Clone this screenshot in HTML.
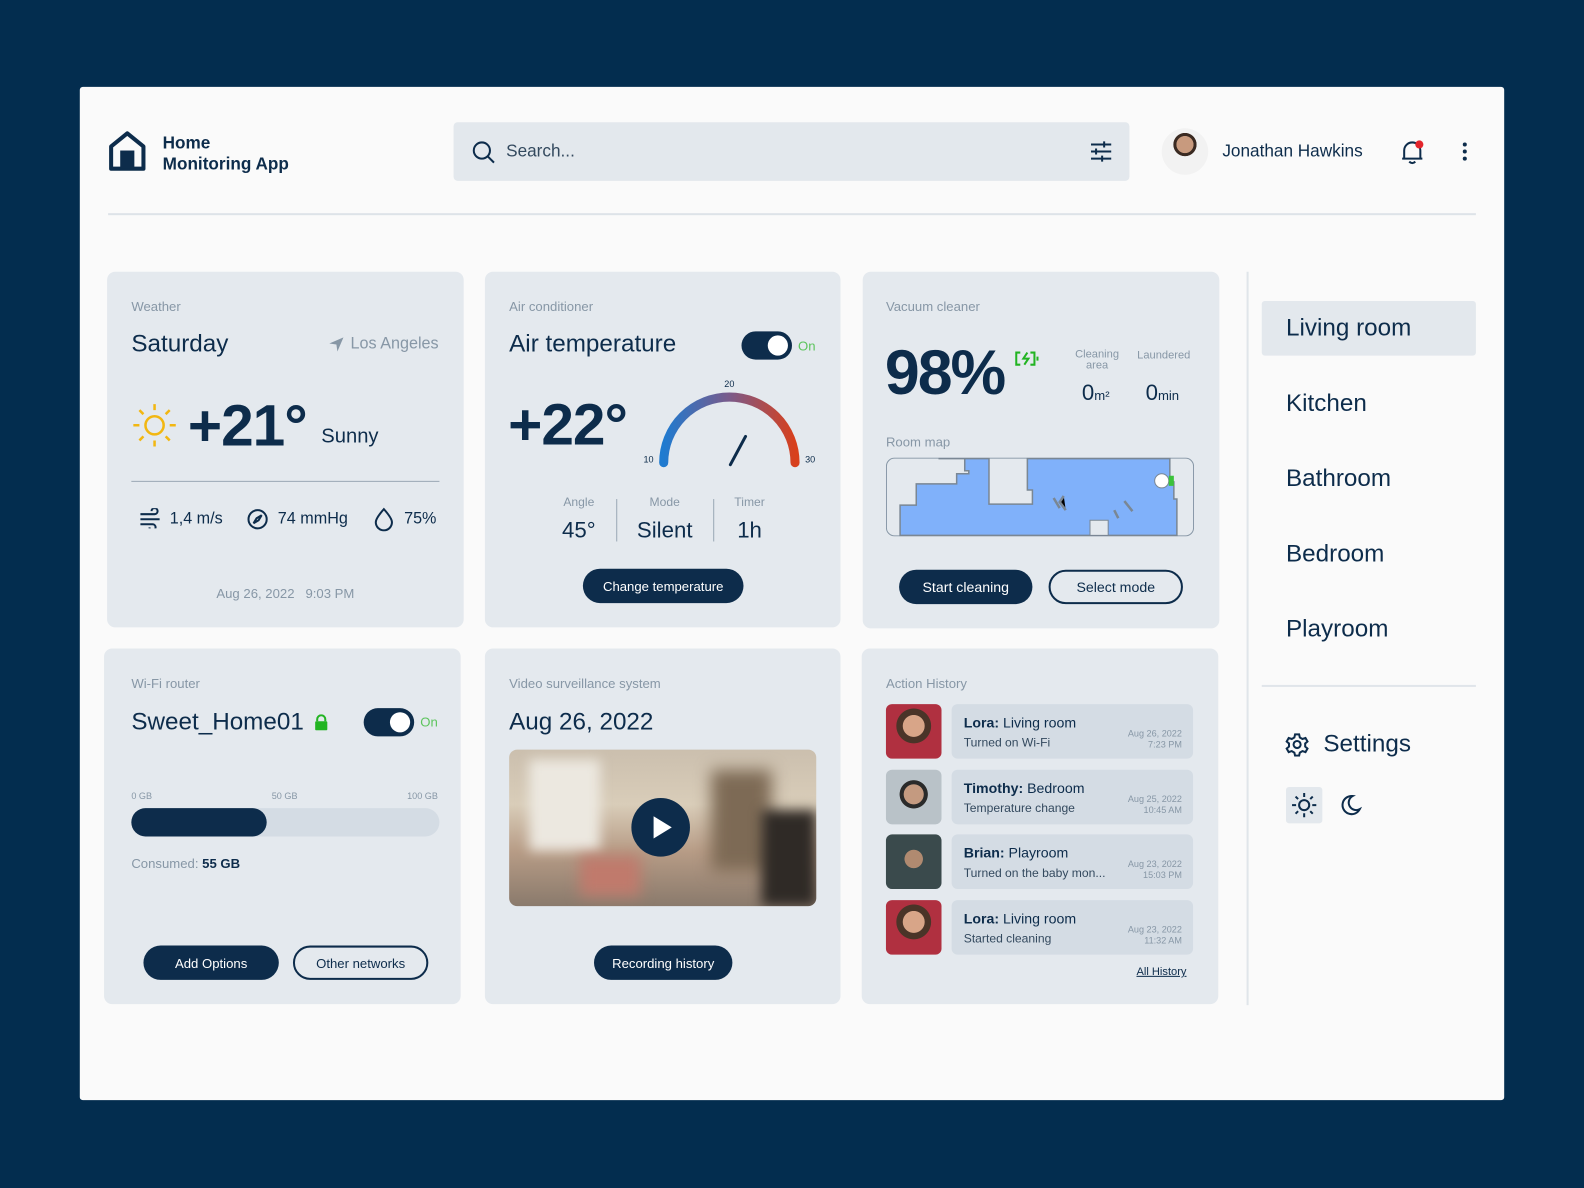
<!DOCTYPE html>
<html><head><meta charset="utf-8"><style>
*{margin:0;padding:0;box-sizing:border-box}
html,body{width:1584px;height:1188px;overflow:hidden;background:#032d4f;font-family:"Liberation Sans",sans-serif;color:#0d2c4b}
#w{position:absolute;left:0;top:0;width:1568px;height:1176px;transform:scale(1.0102);transform-origin:0 0}
.a{position:absolute}
.panel{left:79px;top:86px;width:1410px;height:1003px;background:#fafafa;border-radius:3px}
.card{position:absolute;background:#e4e9ee;border-radius:8px}
.lbl{position:absolute;font-size:13px;color:#8797a6}
.t24{position:absolute;font-size:24px;color:#0d2c4b}
.btn{position:absolute;height:34px;border-radius:17px;background:#0d2c4b;color:#fff;font-size:13px;display:flex;align-items:center;justify-content:center}
.btno{background:transparent;border:2px solid #0d2c4b;color:#0d2c4b}
.tog{position:absolute;width:50px;height:28px;border-radius:14px;background:#0d2c4b}
.tog:after{content:"";position:absolute;right:4px;top:4px;width:20px;height:20px;border-radius:50%;background:#fff}
.on{position:absolute;font-size:13px;color:#5cc45c}
.room{position:absolute;left:1273px;font-size:24px}
.hi{position:absolute;left:942px;width:239px;height:54px;background:#d4dce4;border-radius:6px}
.av{position:absolute;left:877px;width:55px;height:54px;border-radius:6px}
.nm{position:absolute;left:954px;font-size:14px}
.sb{position:absolute;left:954px;font-size:12px;color:#33495e}
.dt{position:absolute;right:398px;font-size:9px;color:#8797a6;text-align:right;line-height:11px}
</style></head><body><div id="w">
<div class="a panel"></div>
<svg class="a" style="left:107px;top:129px" width="38" height="42" viewBox="0 0 38 42"><path d="M3 16 L19 3 L35 16 V38 H3 Z" fill="none" stroke="#0d2c4b" stroke-width="4" stroke-linejoin="round"/><rect x="12" y="20" width="14" height="18" fill="#0d2c4b"/></svg>
<div class="a" style="left:161px;top:131px;font-size:17px;line-height:21px;font-weight:bold">Home<br>Monitoring App</div>
<div class="a" style="left:449px;top:121px;width:669px;height:58px;background:#e3e8ed;border-radius:4px"></div>
<svg class="a" style="left:467px;top:139px" width="24" height="24" viewBox="0 0 24 24"><circle cx="10" cy="10" r="8" fill="none" stroke="#0d2c4b" stroke-width="2"/><path d="M16 16 L22 22" stroke="#0d2c4b" stroke-width="2"/></svg>
<div class="a" style="left:501px;top:140px;font-size:17px;color:#33495e">Search...</div>
<svg class="a" style="left:1078px;top:138px" width="24" height="24" viewBox="0 0 24 24" stroke="#0d2c4b" stroke-width="2" fill="none"><path d="M2 5H22M2 12H22M2 19H22M15 2V8M7 9V15M13 16V22"/></svg>
<div class="a" style="left:1150px;top:127px;width:46px;height:46px;border-radius:50%;background:radial-gradient(circle at 50% 35%,#c89a7e 0 22%,#3a2a22 23% 30%,#f2f2f2 31%)"></div>
<div class="a" style="left:1210px;top:140px;font-size:17px">Jonathan Hawkins</div>
<svg class="a" style="left:1386px;top:138px" width="24" height="26" viewBox="0 0 24 26"><path d="M4 19 V11 A8 8 0 0 1 20 11 V19 Z M2 19 H22 M9 22 Q12 25 15 22" fill="none" stroke="#0d2c4b" stroke-width="2"/><circle cx="19" cy="5" r="4" fill="#e3242b"/></svg>
<svg class="a" style="left:1446px;top:140px" width="8" height="22"><circle cx="4" cy="3" r="2" fill="#0d2c4b"/><circle cx="4" cy="10" r="2" fill="#0d2c4b"/><circle cx="4" cy="17" r="2" fill="#0d2c4b"/></svg>
<div class="a" style="left:107px;top:211px;width:1354px;height:2px;background:#dde3e8"></div>

<!-- weather -->
<div class="card" style="left:106px;top:269px;width:353px;height:352px"></div>
<div class="lbl" style="left:130px;top:296px">Weather</div>
<div class="t24" style="left:130px;top:327px">Saturday</div>
<svg class="a" style="left:325px;top:333px" width="16" height="16" viewBox="0 0 16 16"><path d="M15 1 L1 7 L8 8 L9 15 Z" fill="#8797a6"/></svg>
<div class="a" style="left:347px;top:332px;font-size:16px;color:#8797a6">Los Angeles</div>
<svg class="a" style="left:130px;top:398px" width="46" height="46" viewBox="0 0 46 46" stroke="#f2b712" stroke-width="2.5" fill="none"><circle cx="23" cy="23" r="9"/><path d="M23 2V8M23 38V44M2 23H8M38 23H44M8 8L12 12M34 34L38 38M8 38L12 34M34 12L38 8"/></svg>
<div class="a" style="left:186px;top:388px;font-size:58px;font-weight:bold;letter-spacing:-1px">+21°</div>
<div class="a" style="left:318px;top:421px;font-size:20px">Sunny</div>
<div class="a" style="left:130px;top:476px;width:305px;height:1px;background:#9aa8b5"></div>
<svg class="a" style="left:137px;top:503px" width="24" height="20" viewBox="0 0 24 20" stroke="#0d2c4b" stroke-width="2" fill="none"><path d="M2 6H16A3 3 0 1 0 13 3M2 11H21M2 16H14A3 3 0 1 1 11 19"/></svg>
<div class="a" style="left:168px;top:505px;font-size:16px">1,4 m/s</div>
<svg class="a" style="left:244px;top:503px" width="22" height="22" viewBox="0 0 22 22" stroke="#0d2c4b" stroke-width="2" fill="none"><circle cx="11" cy="11" r="9"/><path d="M15 7 L12 12 L7 15 L10 10Z"/></svg>
<div class="a" style="left:275px;top:505px;font-size:16px">74 mmHg</div>
<svg class="a" style="left:370px;top:502px" width="20" height="24" viewBox="0 0 20 24" stroke="#0d2c4b" stroke-width="2" fill="none"><path d="M10 2 Q18 11 18 15 A8 8 0 0 1 2 15 Q2 11 10 2Z"/></svg>
<div class="a" style="left:400px;top:505px;font-size:16px">75%</div>
<div class="lbl" style="left:106px;width:353px;text-align:center;top:580px">Aug 26, 2022 &nbsp; 9:03 PM</div>

<!-- AC -->
<div class="card" style="left:480px;top:269px;width:352px;height:352px"></div>
<div class="lbl" style="left:504px;top:296px">Air conditioner</div>
<div class="t24" style="left:504px;top:327px">Air temperature</div>
<div class="tog" style="left:734px;top:328px"></div><div class="on" style="left:790px;top:335px">On</div>
<div class="a" style="left:503px;top:387px;font-size:58px;font-weight:bold;letter-spacing:-1px">+22°</div>
<svg class="a" style="left:630px;top:370px" width="190" height="100" viewBox="0 0 190 100"><defs><linearGradient id="g" x1="0" x2="1"><stop offset="0" stop-color="#1f7bd0"/><stop offset=".5" stop-color="#7a5a8a"/><stop offset="1" stop-color="#d8401c"/></linearGradient></defs><path d="M27 88 A65 65 0 0 1 157 88" fill="none" stroke="url(#g)" stroke-width="9" stroke-linecap="round"/><path d="M93 90 L108 62" stroke="#0d2c4b" stroke-width="3" stroke-linecap="round"/><text x="87" y="13" font-size="9" fill="#0d2c4b" font-family="Liberation Sans">20</text><text x="7" y="88" font-size="9" fill="#0d2c4b" font-family="Liberation Sans">10</text><text x="167" y="88" font-size="9" fill="#0d2c4b" font-family="Liberation Sans">30</text></svg>
<div class="lbl" style="left:543px;width:60px;text-align:center;top:490px;font-size:12px">Angle</div>
<div class="lbl" style="left:628px;width:60px;text-align:center;top:490px;font-size:12px">Mode</div>
<div class="lbl" style="left:712px;width:60px;text-align:center;top:490px;font-size:12px">Timer</div>
<div class="a" style="left:543px;width:60px;text-align:center;top:512px;font-size:22px">45°</div>
<div class="a" style="left:618px;width:80px;text-align:center;top:512px;font-size:22px">Silent</div>
<div class="a" style="left:712px;width:60px;text-align:center;top:512px;font-size:22px">1h</div>
<div class="a" style="left:610px;top:494px;width:1px;height:42px;background:#9aa8b5"></div>
<div class="a" style="left:706px;top:494px;width:1px;height:42px;background:#9aa8b5"></div>
<div class="btn" style="left:577px;top:563px;width:159px">Change temperature</div>

<!-- vacuum -->
<div class="card" style="left:854px;top:269px;width:353px;height:353px"></div>
<div class="lbl" style="left:877px;top:296px">Vacuum cleaner</div>
<div class="a" style="left:876px;top:334px;font-size:62px;font-weight:bold;letter-spacing:-2px">98%</div>
<svg class="a" style="left:1004px;top:347px" width="26" height="16" viewBox="0 0 26 16" stroke="#22b422" stroke-width="2" fill="none"><path d="M6 2H2V14H6M16 2H20V14H16M13 2L9 8H14L10 14M23 6V10"/></svg>
<div class="lbl" style="left:1056px;width:60px;text-align:center;top:346px;font-size:11px;line-height:11px">Cleaning<br>area</div>
<div class="lbl" style="left:1120px;width:64px;text-align:center;top:346px;font-size:11px">Laundered</div>
<div class="a" style="left:1071px;top:376px;font-size:22px">0<span style="font-size:13px">m²</span></div>
<div class="a" style="left:1134px;top:376px;font-size:22px">0<span style="font-size:13px">min</span></div>
<div class="lbl" style="left:877px;top:430px">Room map</div>
<svg class="a" style="left:877px;top:453px" width="305" height="78" viewBox="0 0 305 78"><rect x=".5" y=".5" width="304" height="77" rx="8" fill="#e4e9ee" stroke="#8797a6"/><path d="M52 1H78V13H82V16H70V26H30V47H14V77H288V41H285V24H281V1H140V32H145V46H102V1Z" fill="#80b1fa" stroke="#7a8794" stroke-width="1.5"/><rect x="202" y="80" width="0" height="0"/><path d="M202 62H220V77H202Z" fill="#e4e9ee" stroke="#7a8794"/><circle cx="273" cy="23" r="7" fill="#fff" stroke="#7a8794"/><path d="M280 18V28H285V18Z" fill="#3bc23b"/><path d="M166 40l6 10M176 38l-4 6l6 8M236 43l8 10M226 52l4 8" stroke="#7a8794" stroke-width="2.5"/></svg>
<div class="btn" style="left:890px;top:564px;width:132px;font-size:14px">Start cleaning</div>
<div class="btn btno" style="left:1038px;top:564px;width:133px;font-size:14px">Select mode</div>

<!-- wifi -->
<div class="card" style="left:103px;top:642px;width:353px;height:352px"></div>
<div class="lbl" style="left:130px;top:669px">Wi-Fi router</div>
<div class="t24" style="left:130px;top:701px">Sweet_Home01</div>
<svg class="a" style="left:311px;top:707px" width="14" height="16" viewBox="0 0 14 16"><path d="M3 7V5A4 4 0 0 1 11 5V7" fill="none" stroke="#22b422" stroke-width="2"/><rect x="1" y="7" width="12" height="9" rx="1" fill="#22b422"/></svg>
<div class="tog" style="left:360px;top:701px"></div><div class="on" style="left:416px;top:707px">On</div>
<div class="lbl" style="left:130px;top:783px;font-size:9px">0 GB</div>
<div class="lbl" style="left:269px;top:783px;font-size:9px">50 GB</div>
<div class="lbl" style="left:403px;top:783px;font-size:9px">100 GB</div>
<div class="a" style="left:130px;top:800px;width:305px;height:28px;border-radius:14px;background:#d4dce4"></div>
<div class="a" style="left:130px;top:800px;width:134px;height:28px;border-radius:14px;background:#0d2c4b"></div>
<div class="lbl" style="left:130px;top:847px">Consumed: <b style="color:#0d2c4b;font-weight:bold">55 GB</b></div>
<div class="btn" style="left:142px;top:936px;width:134px">Add Options</div>
<div class="btn btno" style="left:290px;top:936px;width:134px">Other networks</div>

<!-- video -->
<div class="card" style="left:480px;top:642px;width:352px;height:352px"></div>
<div class="lbl" style="left:504px;top:669px">Video surveillance system</div>
<div class="t24" style="left:504px;top:701px">Aug 26, 2022</div>
<div class="a" style="left:504px;top:742px;width:304px;height:155px;border-radius:8px;overflow:hidden;background:linear-gradient(180deg,#cbbfae 0%,#d9cdb9 35%,#b79c86 65%,#8a7a6c 100%)">
<div class="a" style="left:20px;top:10px;width:70px;height:90px;background:#ece8e0;filter:blur(6px)"></div>
<div class="a" style="left:200px;top:20px;width:60px;height:100px;background:#7d6a55;filter:blur(8px)"></div>
<div class="a" style="left:250px;top:60px;width:54px;height:95px;background:#2f2a26;filter:blur(6px)"></div>
<div class="a" style="left:70px;top:105px;width:60px;height:40px;background:#c07a6c;filter:blur(7px)"></div>
</div>
<div class="a" style="left:625px;top:790px;width:58px;height:58px;border-radius:50%;background:#0d2c4b"></div>
<svg class="a" style="left:645px;top:806px" width="22" height="26"><path d="M2 2L20 13L2 24Z" fill="#fff"/></svg>
<div class="btn" style="left:588px;top:936px;width:137px">Recording history</div>

<!-- history -->
<div class="card" style="left:853px;top:642px;width:353px;height:352px"></div>
<div class="lbl" style="left:877px;top:669px">Action History</div>
<div class="hi" style="top:697px"></div><div class="av" style="top:697px;background:radial-gradient(circle at 50% 40%,#d8a588 0 25%,#4a3428 26% 40%,#b03040 41%)"></div>
<div class="nm" style="top:707px"><b>Lora:</b> Living room</div><div class="sb" style="top:728px">Turned on Wi-Fi</div><div class="dt" style="top:721px">Aug 26, 2022<br>7:23 PM</div>
<div class="hi" style="top:762px"></div><div class="av" style="top:762px;background:radial-gradient(circle at 50% 45%,#c49a80 0 24%,#2a2a2a 25% 34%,#b9c2c8 35%)"></div>
<div class="nm" style="top:772px"><b>Timothy:</b> Bedroom</div><div class="sb" style="top:793px">Temperature change</div><div class="dt" style="top:786px">Aug 25, 2022<br>10:45 AM</div>
<div class="hi" style="top:826px"></div><div class="av" style="top:826px;background:radial-gradient(circle at 50% 45%,#b08a70 0 22%,#3a4a4c 23%)"></div>
<div class="nm" style="top:836px"><b>Brian:</b> Playroom</div><div class="sb" style="top:857px">Turned on the baby mon...</div><div class="dt" style="top:850px">Aug 23, 2022<br>15:03 PM</div>
<div class="hi" style="top:891px"></div><div class="av" style="top:891px;background:radial-gradient(circle at 50% 40%,#d8a588 0 25%,#4a3428 26% 40%,#b03040 41%)"></div>
<div class="nm" style="top:901px"><b>Lora:</b> Living room</div><div class="sb" style="top:922px">Started cleaning</div><div class="dt" style="top:915px">Aug 23, 2022<br>11:32 AM</div>
<div class="a" style="left:1125px;top:956px;font-size:11px;text-decoration:underline">All History</div>

<!-- sidebar -->
<div class="a" style="left:1234px;top:269px;width:2px;height:726px;background:#e0e5ea"></div>
<div class="a" style="left:1249px;top:298px;width:212px;height:54px;background:#e3e8ed;border-radius:3px"></div>
<div class="room" style="top:311px">Living room</div>
<div class="room" style="top:386px">Kitchen</div>
<div class="room" style="top:460px">Bathroom</div>
<div class="room" style="top:535px">Bedroom</div>
<div class="room" style="top:609px">Playroom</div>
<div class="a" style="left:1249px;top:678px;width:212px;height:2px;background:#e0e5ea"></div>
<svg class="a" style="left:1272px;top:725px" width="24" height="24" viewBox="0 0 24 24" fill="none" stroke="#0d2c4b" stroke-width="2"><circle cx="12" cy="12" r="3.5"/><path d="M10 2h4l.7 3 2.6 1.5 3-1 2 3.5-2.3 2v3l2.3 2-2 3.5-3-1-2.6 1.5-.7 3h-4l-.7-3-2.6-1.5-3 1-2-3.5 2.3-2v-3l-2.3-2 2-3.5 3 1L9.3 5z"/></svg>
<div class="room" style="left:1310px;top:723px">Settings</div>
<div class="a" style="left:1273px;top:779px;width:36px;height:36px;background:#e3e8ed;border-radius:3px"></div>
<svg class="a" style="left:1278px;top:784px" width="26" height="26" viewBox="0 0 26 26" fill="none" stroke="#0d2c4b" stroke-width="2"><circle cx="13" cy="13" r="5"/><path d="M13 1V5M13 21V25M1 13H5M21 13H25M4.5 4.5L7 7M19 19L21.5 21.5M4.5 21.5L7 19M19 7L21.5 4.5"/></svg>
<svg class="a" style="left:1325px;top:785px" width="24" height="24" viewBox="0 0 24 24" fill="none" stroke="#0d2c4b" stroke-width="2"><path d="M14 3A9 9 0 1 0 21 16A7 7 0 0 1 14 3Z"/></svg>
</div></body></html>
